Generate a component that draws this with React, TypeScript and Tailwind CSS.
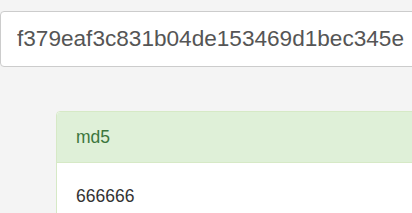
export default function App() {
  const hash = "f379eaf3c831b04de153469d1bec345e";

  return (
    <div className="h-[213px] w-[412px] overflow-hidden bg-[#f4f4f4] font-['Liberation_Sans',Arial,sans-serif]">
      <div className="pt-[11px]">
        <input
          readOnly
          value={hash}
          className="block h-[56px] w-[460px] rounded-[4px] border border-[#cccccc] bg-white pl-[16px] text-[22.6px] text-[#555555] outline-none"
        />
      </div>

      <div className="ml-[56px] mt-[44px] w-[420px] rounded-t-[4px] border border-[#d6e9c6] bg-white">
        <div className="flex h-[51px] items-center rounded-t-[4px] border-b border-[#d6e9c6] bg-[#dff0d8] pl-[19px] pt-[1px] text-[17.5px] text-[#3c763d]">
          md5
        </div>
        <div className="pl-[19px] pt-[20px] pb-[20px] text-[17.5px] text-[#333333]">666666</div>
      </div>
    </div>
  );
}
